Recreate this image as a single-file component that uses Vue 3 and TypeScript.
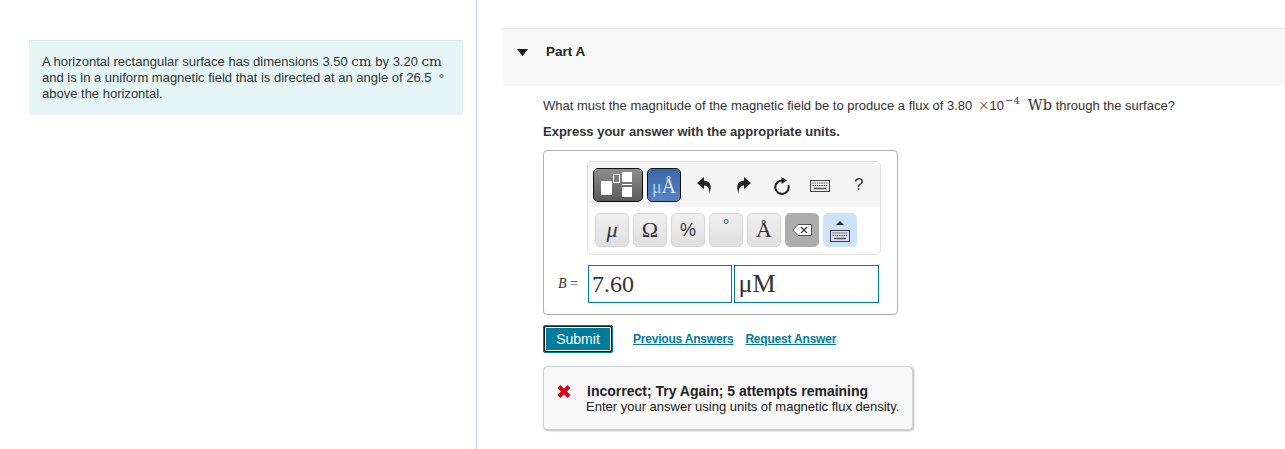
<script setup lang="ts">
const unitKeys = [
	{ label: "μ", cls: "italic" },
	{ label: "Ω", cls: "" },
	{ label: "%", cls: "sans" },
	{ label: "°", cls: "raised" },
	{ label: "Å", cls: "" },
]
</script>

<template>
	<div class="page">
		<aside class="left-col">
			<div class="intro">
				A horizontal rectangular surface has dimensions 3.50 <span class="math">cm</span> by 3.20
				<span class="math">cm</span> and is in a uniform magnetic field that is directed at an angle of
				26.5 <span class="deg">°</span><br />above the horizontal.
			</div>
		</aside>

		<main class="right-col">
			<header class="part-head">
				<svg class="caret" width="11" height="7" viewBox="0 0 11 7"><path d="M0 0h11L5.500 7z" fill="#1a1a1a" /></svg>
				<span class="part-title">Part A</span>
			</header>

			<section class="part-body">
				<p class="question">
					What must the magnitude of the magnetic field be to produce a flux of 3.80
					<span class="times">×</span>10<span class="exp">−4</span>
					<span class="math wb">Wb</span> through the surface?
				</p>
				<p class="hint">Express your answer with the appropriate units.</p>

				<div class="answer-box">
					<div class="toolbox">
						<div class="tool-top">
							<button type="button" class="tpl-btn">
								<svg width="48" height="32" viewBox="0 0 48 32">
									<rect x="7" y="12" width="11" height="14" fill="#fff" />
									<rect x="19.500" y="5.500" width="6" height="8" fill="none" stroke="#fff" />
									<rect x="28" y="3" width="10" height="10" fill="#fff" />
									<rect x="28" y="15" width="10" height="1" fill="#fff" />
									<rect x="28" y="18" width="10" height="10" fill="#fff" />
								</svg>
							</button>
							<button type="button" class="unit-btn"><span class="mu">μ</span>Å</button>
							<div class="tool-icons">
								<svg class="ico undo" width="16" height="16" viewBox="0 0 16 16"><path d="M7 0 0 6l7 6V8.500c3.500 0 5 2 5.500 7.500 2.500-6 1.500-12-5.500-12.500z" fill="#222" /></svg>
								<svg class="ico redo" width="16" height="16" viewBox="0 0 16 16"><path d="M9 0l7 6-7 6V8.500c-3.500 0-5 2-5.500 7.500C1 10 2 4 9 3.500z" fill="#222" /></svg>
								<svg class="ico reload" width="18" height="18" viewBox="0 0 18 18">
									<path d="M9 3.500A6.700 6.700 0 1 0 15.300 8" fill="none" stroke="#222" stroke-width="2" />
									<path d="M8.500 0l5.500 3.500-5.500 3.500z" fill="#222" />
								</svg>
								<svg class="ico kb" width="20" height="12" viewBox="0 0 20 12">
									<rect x=".5" y=".5" width="19" height="11" fill="#eee" stroke="#444" />
									<path d="M2.500 3h15M2.500 5.500h15" stroke="#555" stroke-width="1.200" stroke-dasharray="1.500 .7" />
									<path d="M4 8.500h12" stroke="#555" stroke-width="1.500" />
								</svg>
								<span class="help">?</span>
							</div>
						</div>
						<div class="tool-bottom">
							<button v-for="k in unitKeys" :key="k.label" type="button" class="key" :class="k.cls">
								{{ k.label }}
							</button>
							<button type="button" class="key del">
								<svg width="20" height="12" viewBox="0 0 20 12">
									<path d="M6 .5h13.500v11H6L.8 6z" fill="#fff" stroke="#555" />
									<path d="M9 3l6 6M15 3l-6 6" stroke="#333" stroke-width="1.200" />
								</svg>
							</button>
							<button type="button" class="key kb-key">
								<svg width="20" height="24" viewBox="0 0 20 24">
									<path d="M6 5l4-4 4 4z" fill="#222" />
									<rect x=".5" y="10.500" width="19" height="11" fill="#dde" stroke="#444" />
									<path d="M2.500 13h15M2.500 15.500h15" stroke="#555" stroke-width="1.200" stroke-dasharray="1.500 .7" />
									<path d="M4 18.500h12" stroke="#555" stroke-width="1.500" />
								</svg>
							</button>
						</div>
					</div>

					<div class="input-row">
						<span class="var-label"><i>B</i> =</span>
						<div class="field">7.60</div>
						<div class="field unit">μM</div>
					</div>
				</div>

				<div class="actions">
					<button type="button" class="submit">Submit</button>
					<a class="link first">Previous Answers</a>
					<a class="link">Request Answer</a>
				</div>

				<div class="feedback">
					<svg class="x-mark" width="14" height="13" viewBox="0 0 14 13">
						<path d="M2 1.500l10 10M12 1.500l-10 10" stroke="#d9001b" stroke-width="4" />
					</svg>
					<div class="feedback-text">
						<div class="fb-title">Incorrect; Try Again; 5 attempts remaining</div>
						<div class="fb-sub">Enter your answer using units of magnetic flux density.</div>
					</div>
				</div>
			</section>
		</main>
	</div>
</template>

<style>
body {
	background: #fff;
}
</style>

<style scoped>
.page {
	display: flex;
	width: 1285px;
	height: 449px;
	overflow: hidden;
	font-family: "Liberation Sans", Arial, sans-serif;
	font-size: 13px;
	color: #333;
}

.left-col {
	box-sizing: border-box;
	width: 477px;
	height: 449px;
	padding: 40px 13px 0 29px;
	border-right: 1px solid #b8cfe0;
}

.intro {
	box-sizing: border-box;
	height: 75px;
	padding: 13px 13px 0;
	line-height: 16px;
	background: #e5f5f6;
	border-top: 1px solid #dbe4e8;
}

.math {
	font-family: "DejaVu Serif", serif;
	font-size: 13.500px;
	line-height: 0;
}

.deg {
	font-family: "DejaVu Sans", sans-serif;
	font-size: 13px;
	line-height: 0;
	position: relative;
	top: 1px;
	margin-left: 3px;
	color: #555;
}

.right-col {
	margin-left: 26px;
	flex: 1;
}

.part-head {
	display: flex;
	align-items: flex-start;
	height: 58px;
	margin-top: 28px;
	background: #f8f8f8;
	border-top: 1px solid #e2e2e2;
	box-sizing: border-box;
}

.caret {
	margin: 20px 0 0 14px;
}

.part-title {
	margin: 15px 0 0 18px;
	font-weight: bold;
	font-size: 13.500px;
	color: #222;
}

.part-body {
	padding-left: 40px;
}

.question {
	margin: 9px 0 0;
	line-height: 20px;
	font-size: 13px;
}

.times {
	font-family: "DejaVu Sans", sans-serif;
	font-weight: 200;
	font-size: 14px;
	margin-left: 2px;
}

.exp {
	font-family: "DejaVu Serif", serif;
	font-size: 10px;
	line-height: 0;
	position: relative;
	top: -6px;
	margin-left: 1px;
	color: #444;
}

.wb {
	font-size: 14.500px;
	margin-left: 8px;
}

.hint {
	margin: 6px 0 0;
	line-height: 20px;
	font-size: 13px;
	font-weight: bold;
}

.answer-box {
	box-sizing: border-box;
	width: 355px;
	height: 165px;
	margin-top: 8px;
	padding: 10px 16px 0 10px;
	border: 1px solid #b0b0b0;
	border-radius: 4px;
}

.toolbox {
	box-sizing: border-box;
	width: 294px;
	height: 94px;
	margin-left: 33px;
	background: #fff;
	border: 1px solid #e2e2e2;
	border-radius: 5px;
	overflow: hidden;
}

.tool-top {
	display: flex;
	align-items: center;
	height: 45px;
	padding: 0 0 0 5px;
	background: #f5f5f5;
}

button {
	padding: 0;
	margin: 0;
	font: inherit;
}

.tpl-btn {
	display: flex;
	align-items: center;
	justify-content: center;
	box-sizing: border-box;
	width: 50px;
	height: 34px;
	border: 1px solid #111;
	border-radius: 5px;
	background: linear-gradient(#8e8e8e, #5a5a5a);
}

.unit-btn {
	box-sizing: border-box;
	width: 34px;
	height: 34px;
	margin-left: 4px;
	padding-top: 3px;
	border: 1px solid #111;
	border-radius: 5px;
	background: linear-gradient(#3a67a8, #5683c4);
	color: #e6eef8;
	font-family: "Liberation Serif", serif;
	font-size: 20px;
	line-height: 28px;
}

.mu {
	font-size: 18px;
	color: #b9cde8;
}

.tool-icons {
	display: flex;
	align-items: center;
	margin-left: 16px;
}

.ico {
	flex: none;
}

.undo {
	margin-right: 22px;
}

.redo {
	margin-right: 22px;
}

.reload {
	margin-right: 19px;
	margin-top: 2px;
}

.kb {
	margin-right: 24px;
	margin-top: 2px;
}

.help {
	font-size: 17px;
	color: #333;
}

.tool-bottom {
	display: flex;
	gap: 4px;
	padding: 6px 0 0 7px;
}

.key {
	box-sizing: border-box;
	display: flex;
	align-items: center;
	justify-content: center;
	width: 34px;
	height: 34px;
	border: 1px solid #d6d6d6;
	border-radius: 5px;
	background: linear-gradient(#f0f0f0, #e0e0e0);
	font-family: "Liberation Serif", serif;
	font-size: 22px;
	color: #333;
}

.key.italic {
	font-style: italic;
}

.key.sans {
	font-family: "Liberation Sans", sans-serif;
	font-size: 18px;
}

.key.raised {
	align-items: flex-start;
	font-size: 15px;
	padding-top: 2px;
}

.key.del {
	background: #aeaeae;
	border-color: #aeaeae;
}

.key.kb-key {
	background: #cde3fb;
	border-color: #cde3fb;
}

.kb-key svg {
	margin-top: 4px;
}

.input-row {
	display: flex;
	align-items: center;
	margin-top: 10px;
}

.var-label {
	box-sizing: border-box;
	width: 34px;
	padding-right: 10px;
	font-family: "Liberation Serif", serif;
	font-size: 14px;
	text-align: right;
	white-space: nowrap;
}

.field {
	box-sizing: border-box;
	width: 145px;
	height: 38px;
	margin-right: 2px;
	padding-left: 3px;
	border: 1px solid #007c9c;
	font-family: "Liberation Serif", serif;
	font-size: 24px;
	line-height: 36px;
	color: #333;
}

.field.unit {
	font-size: 26px;
}

.actions {
	display: flex;
	align-items: center;
	margin-top: 10px;
}

.submit {
	box-sizing: border-box;
	width: 70px;
	height: 28px;
	border: 2px solid #0f1b20;
	outline: 1px solid #007c9c;
	outline-offset: -1px;
	border-radius: 3px;
	background: #007c9c;
	box-shadow: inset 0 0 0 1px #fff;
	color: #fff;
	font-size: 14px;
}

.link {
	color: #007c9c;
	font-size: 12px;
	font-weight: bold;
	letter-spacing: -0.2px;
	text-decoration: underline;
}

.link.first {
	margin: 0 12px 0 20px;
}

.feedback {
	box-sizing: border-box;
	display: flex;
	width: 370px;
	height: 64px;
	margin-top: 13px;
	padding: 16px 0 0 13px;
	background: #f8f8f8;
	border: 1px solid #d0d0d0;
	border-radius: 4px;
	box-shadow: 1px 1px 2px #bbb;
}

.x-mark {
	flex: none;
	margin-top: 2px;
}

.feedback-text {
	margin-left: 15px;
	color: #222;
}

.fb-title {
	font-weight: bold;
	font-size: 14px;
	line-height: 16px;
	margin-left: 1px;
}

.fb-sub {
	font-size: 13px;
	line-height: 16px;
}
</style>
